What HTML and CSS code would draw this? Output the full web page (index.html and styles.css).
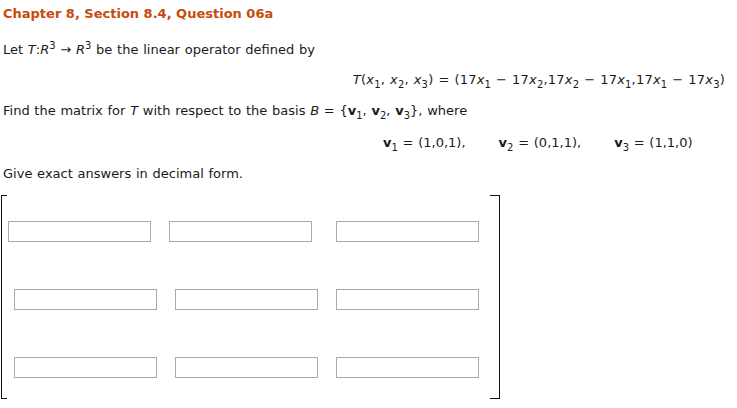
FILE: index.html
```html
<!DOCTYPE html>
<html>
<head>
<meta charset="utf-8">
<link rel="stylesheet" href="styles.css">
</head>
<body>
<h1 class="title">Chapter 8, Section 8.4, Question 06a</h1>
<p class="line l-let">Let <i>T</i>:<i>R</i><sup>3</sup> → <i>R</i><sup>3</sup> be the linear operator defined by</p>
<p class="line l-formula"><i>T</i>(<i>x</i><sub>1</sub>, <i>x</i><sub>2</sub>, <i>x</i><sub>3</sub>) = (17<i>x</i><sub>1</sub> − 17<i>x</i><sub>2</sub>,17<i>x</i><sub>2</sub> − 17<i>x</i><sub>1</sub>,17<i>x</i><sub>1</sub> − 17<i>x</i><sub>3</sub>)</p>
<p class="line l-find">Find the matrix for <i>T</i> with respect to the basis <i>B</i> = {<b>v</b><sub>1</sub>, <b>v</b><sub>2</sub>, <b>v</b><sub>3</sub>}, where</p>
<p class="line l-vecs"><span class="vec"><b>v</b><sub>1</sub> = (1,0,1),</span><span class="vec"><b>v</b><sub>2</sub> = (0,1,1),</span><span class="vec"><b>v</b><sub>3</sub> = (1,1,0)</span></p>
<p class="line l-give">Give exact answers in decimal form.</p>
<div class="matrix">
  <div class="br br-left"></div>
  <div class="cells">
    <input class="cell shift" type="text">
    <input class="cell shift" type="text">
    <input class="cell" type="text">
    <input class="cell" type="text">
    <input class="cell" type="text">
    <input class="cell" type="text">
    <input class="cell" type="text">
    <input class="cell" type="text">
    <input class="cell" type="text">
  </div>
  <div class="br br-right"></div>
</div>
</body>
</html>
```
FILE: styles.css
```css
html, body {
  margin: 0;
  padding: 0;
  background: #fff;
}
body {
  font-family: "DejaVu Sans", Verdana, sans-serif;
  font-size: 13px;
  color: #1a1a1a;
}
.title {
  margin: 4px 0 0 3px;
  font-size: 13px;
  line-height: 20px;
  font-weight: bold;
  color: #c84b0c;
}
.line {
  margin: 0;
  padding-left: 3px;
  line-height: 16px;
  white-space: nowrap;
  word-spacing: 0.6px;
}
sup, sub {
  font-size: 10px;
  line-height: 0;
}
.l-let { margin-top: 18px; }
.l-formula { margin-top: 14px; text-align: right; padding-right: 12px; letter-spacing: 0.2px; }
.l-find { margin-top: 15px; }
.l-vecs { margin-top: 16px; padding-left: 383px; display: flex; gap: 33px; }
.l-give { margin-top: 15px; }
.matrix {
  margin: 13px 0 0 1px;
  display: flex;
  width: 499px;
}
.br {
  border: 1px solid #111;
}
.br-left {
  width: 5px;
  border-right: none;
}
.br-right {
  width: 9px;
  border-left: none;
}
.cells {
  display: grid;
  grid-template-columns: repeat(3, 143px);
  column-gap: 18px;
  row-gap: 47px;
  padding: 26px 11px 21px 7px;
}
.cell {
  box-sizing: border-box;
  width: 143px;
  height: 21px;
  margin: 0;
  padding: 0;
  border: 1px solid #a9a9a9;
  background: #fff;
  outline: none;
}
.shift {
  margin-left: -6px;
}
```
